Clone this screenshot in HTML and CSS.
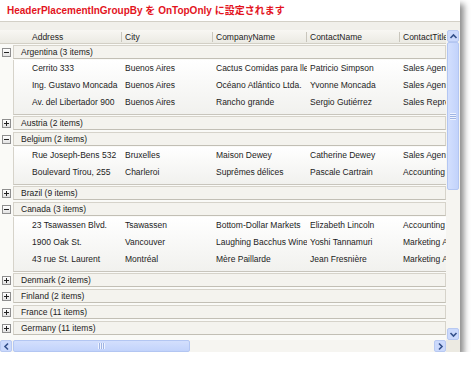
FILE: index.html
```html
<!DOCTYPE html>
<html>

<head>
	<meta charset="UTF-8">
	<title>GroupBy</title>
	<link rel="stylesheet" href="styles.css">
</head>

<body>
	<div class="window">
		<div class="title">HeaderPlacementInGroupBy を OnTopOnly に設定されます</div>
		<div class="group-panel"></div>

		<div class="body">
			<div class="viewport">
				<div class="col-header">
					<div></div>
					<div class="hcell">Address</div>
					<div class="hcell">City</div>
					<div class="hcell">CompanyName</div>
					<div class="hcell">ContactName</div>
					<div class="hcell">ContactTitle</div>
				</div>

				<div class="group">
					<div class="exp-cell"><span class="exp"></span></div>
					<div class="gbox">Argentina (3 items)</div>
				</div>
				<div class="items">
					<div class="row"><span></span><span>Cerrito 333</span><span>Buenos Aires</span><span>Cactus Comidas para llevar</span><span>Patricio Simpson</span><span>Sales Agent</span></div>
					<div class="row"><span></span><span>Ing. Gustavo Moncada</span><span>Buenos Aires</span><span>Océano Atlántico Ltda.</span><span>Yvonne Moncada</span><span>Sales Agent</span></div>
					<div class="row"><span></span><span>Av. del Libertador 900</span><span>Buenos Aires</span><span>Rancho grande</span><span>Sergio Gutiérrez</span><span>Sales Representative</span></div>
				</div>

				<div class="group">
					<div class="exp-cell"><span class="exp plus"></span></div>
					<div class="gbox">Austria (2 items)</div>
				</div>

				<div class="group">
					<div class="exp-cell"><span class="exp"></span></div>
					<div class="gbox">Belgium (2 items)</div>
				</div>
				<div class="items">
					<div class="row"><span></span><span>Rue Joseph-Bens 532</span><span>Bruxelles</span><span>Maison Dewey</span><span>Catherine Dewey</span><span>Sales Agent</span></div>
					<div class="row"><span></span><span>Boulevard Tirou, 255</span><span>Charleroi</span><span>Suprêmes délices</span><span>Pascale Cartrain</span><span>Accounting Manager</span></div>
				</div>

				<div class="group">
					<div class="exp-cell"><span class="exp plus"></span></div>
					<div class="gbox">Brazil (9 items)</div>
				</div>

				<div class="group">
					<div class="exp-cell"><span class="exp"></span></div>
					<div class="gbox">Canada (3 items)</div>
				</div>
				<div class="items">
					<div class="row"><span></span><span>23 Tsawassen Blvd.</span><span>Tsawassen</span><span>Bottom-Dollar Markets</span><span>Elizabeth Lincoln</span><span>Accounting Manager</span></div>
					<div class="row"><span></span><span>1900 Oak St.</span><span>Vancouver</span><span>Laughing Bacchus Wine Cellars</span><span>Yoshi Tannamuri</span><span>Marketing Assistant</span></div>
					<div class="row"><span></span><span>43 rue St. Laurent</span><span>Montréal</span><span>Mère Paillarde</span><span>Jean Fresnière</span><span>Marketing Assistant</span></div>
				</div>

				<div class="group">
					<div class="exp-cell"><span class="exp plus"></span></div>
					<div class="gbox">Denmark (2 items)</div>
				</div>
				<div class="group">
					<div class="exp-cell"><span class="exp plus"></span></div>
					<div class="gbox">Finland (2 items)</div>
				</div>
				<div class="group">
					<div class="exp-cell"><span class="exp plus"></span></div>
					<div class="gbox">France (11 items)</div>
				</div>
				<div class="group">
					<div class="exp-cell"><span class="exp plus"></span></div>
					<div class="gbox">Germany (11 items)</div>
				</div>
			</div>

			<div class="vscroll">
				<div class="sbtn">
					<svg width="9" height="9" viewBox="0 0 9 9"><polyline points="1.5,6 4.5,3 7.5,6" fill="none" stroke="#34508a" stroke-width="1.6"/></svg>
				</div>
				<div class="vthumb"><span class="vgrip"></span></div>
				<div class="track"></div>
				<div class="sbtn">
					<svg width="9" height="9" viewBox="0 0 9 9"><polyline points="1.5,3 4.5,6 7.5,3" fill="none" stroke="#34508a" stroke-width="1.6"/></svg>
				</div>
			</div>
		</div>

		<div class="hbar">
			<div class="hscroll">
				<div class="sbtn">
					<svg width="9" height="9" viewBox="0 0 9 9"><polyline points="6,1.5 3,4.5 6,7.5" fill="none" stroke="#34508a" stroke-width="1.6"/></svg>
				</div>
				<div class="hthumb"><span class="hgrip"></span></div>
				<div class="track"></div>
				<div class="sbtn">
					<svg width="9" height="9" viewBox="0 0 9 9"><polyline points="3,1.5 6,4.5 3,7.5" fill="none" stroke="#34508a" stroke-width="1.6"/></svg>
				</div>
			</div>
			<div class="corner"></div>
		</div>
	</div>
</body>

</html>
```

FILE: styles.css
```css
body {
	margin: 0;
	background: #fff;
}

.window {
	width: 460px;
	height: 352px;
	background: #fff;
	box-shadow: 4px 4px 6px rgba(0, 0, 0, 0.45);
	display: flex;
	flex-direction: column;
	font-family: "Liberation Sans", Arial, sans-serif;
	font-size: 8.5px;
	color: #1c1c1c;
}

.title {
	height: 21px;
	padding-left: 7px;
	font-family: "Liberation Sans", "Noto Sans CJK JP", sans-serif;
	font-weight: bold;
	font-size: 10px;
	line-height: 22px;
	color: #e3141e;
}

.group-panel {
	height: 8px;
	border-top: 1px solid #d3d0c7;
	background: #f1f0eb;
}

.body {
	display: flex;
	height: 310px;
}

.viewport {
	width: 446px;
	overflow: hidden;
	background: #fafaf7;
}

/* column headers */
.col-header {
	display: grid;
	grid-template-columns: 29px 93px 91px 94px 93px 93px;
	height: 14px;
	box-sizing: border-box;
	background: linear-gradient(#f8f7f3, #ebeae3);
	border-bottom: 1px solid #d2cfc5;
}

.hcell {
	margin: 2px 0 1px;
	padding-left: 3px;
	border-right: 1px solid #c9c6bc;
	line-height: 10px;
	white-space: nowrap;
	overflow: hidden;
}

/* group rows */
.group {
	display: flex;
	height: 16px;
}

.exp-cell {
	width: 13px;
	display: flex;
	align-items: center;
	justify-content: center;
}

.exp {
	position: relative;
	width: 7px;
	height: 7px;
	border: 1px solid #8e8e8e;
	background: linear-gradient(#fff, #e2e2e2);
}

.exp::before {
	content: "";
	position: absolute;
	left: 1px;
	top: 3px;
	width: 5px;
	height: 1px;
	background: #222;
}

.plus::after {
	content: "";
	position: absolute;
	left: 3px;
	top: 1px;
	width: 1px;
	height: 5px;
	background: #222;
}

.gbox {
	flex: 1;
	margin: 1px 0;
	padding-left: 7px;
	border: 1px solid #d6d3ca;
	border-bottom-color: #c2bfb5;
	background: #f4f3ee;
	line-height: 12px;
	white-space: nowrap;
}

/* item rows */
.items {
	margin-left: 13px;
	padding-bottom: 3px;
	border-left: 1px solid #d6d3ca;
	border-bottom: 1px solid #c8c5bc;
	background: linear-gradient(#fff, #f1f1ee);
}

.row {
	display: grid;
	grid-template-columns: 15px 93px 91px 94px 93px 93px;
	height: 17px;
	line-height: 17px;
}

.row span {
	padding-left: 3px;
	white-space: nowrap;
	overflow: hidden;
}

/* scroll bars */
.vscroll {
	width: 12px;
	padding: 0 1px;
	display: flex;
	flex-direction: column;
	background: #f6f5f1;
}

.sbtn {
	width: 12px;
	height: 12px;
	box-sizing: border-box;
	border: 1px solid #b8c9f1;
	border-radius: 2px;
	background: #cbd9fc;
	display: flex;
	align-items: center;
	justify-content: center;
}

.track {
	flex: 1;
}

.vthumb {
	height: 148px;
	box-sizing: border-box;
	border: 1px solid #b3c6f2;
	border-radius: 2px;
	background: linear-gradient(90deg, #d3dffd, #c2d3fb);
	display: flex;
	align-items: center;
	justify-content: center;
}

.vgrip {
	width: 6px;
	height: 7px;
	background: repeating-linear-gradient(#eef3ff 0 1px, #9fb4e3 1px 2px);
}

.hbar {
	display: flex;
	height: 12px;
}

.hscroll {
	width: 446px;
	display: flex;
	background: #f6f5f1;
}

.hthumb {
	width: 177px;
	margin-left: 1px;
	box-sizing: border-box;
	border: 1px solid #b3c6f2;
	border-radius: 2px;
	background: linear-gradient(#d3dffd, #c2d3fb);
	display: flex;
	align-items: center;
	justify-content: center;
}

.hgrip {
	width: 7px;
	height: 6px;
	background: repeating-linear-gradient(90deg, #eef3ff 0 1px, #9fb4e3 1px 2px);
}

.corner {
	width: 14px;
	background: #eceae2;
}
```
